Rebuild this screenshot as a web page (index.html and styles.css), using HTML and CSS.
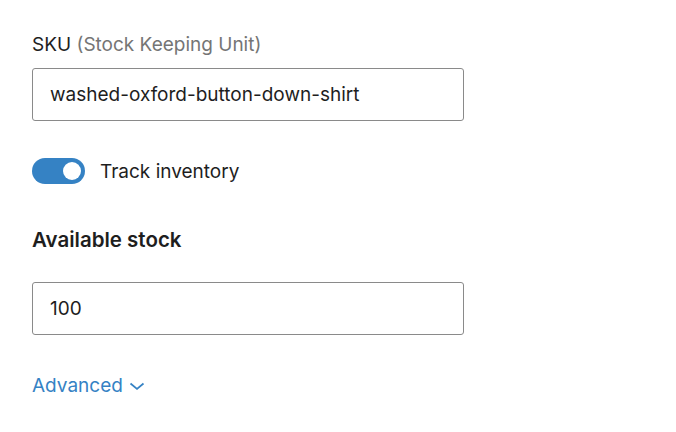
FILE: index.html
```html
<!DOCTYPE html>
<html lang="en">
<head>
  <meta charset="UTF-8" />
  <title>Inventory</title>
  <link rel="stylesheet" href="styles.css">
</head>
<body>

  <main class="panel">
    <div class="field">
      <label class="field-label" for="sku">SKU <span class="hint">(Stock Keeping Unit)</span></label>
      <input class="text-input" id="sku" type="text" value="washed-oxford-button-down-shirt">
    </div>

    <label class="toggle-row">
      <span class="toggle is-on"><span class="toggle-thumb"></span></span>
      <span class="toggle-text">Track inventory</span>
    </label>

    <div class="field">
      <h3 class="section-title">Available stock</h3>
      <input class="text-input" type="text" value="100">
    </div>

    <a class="advanced" href="#">
      Advanced
      <svg width="16" height="9" viewBox="0 0 16 9"><polyline points="1.5,1.5 8,7 14.5,1.5" fill="none" stroke="currentColor" stroke-width="1.7"/></svg>
    </a>
  </main>

</body>
</html>
```

FILE: styles.css
```css
* {
  margin: 0;
  padding: 0;
  box-sizing: border-box;
}

body {
  font-family: 'Inter', 'Noto Sans', sans-serif;
  background: #fff;
  color: #1e1e1e;
  font-size: 19px;
}

.panel {
  padding: 31px 32px;
  width: 496px;
}

.field-label {
  display: block;
  line-height: 28px;
  margin-bottom: 9px;
}

.hint {
  color: #757575;
}

.text-input {
  display: block;
  width: 100%;
  height: 53px;
  padding: 0 17px;
  font: inherit;
  color: #1e1e1e;
  border: 1.5px solid #8a8a8a;
  border-radius: 3px;
  background: #fff;
}

.toggle-row {
  display: flex;
  align-items: center;
  gap: 15px;
  margin: 37px 0 42px;
}

.toggle {
  position: relative;
  width: 53px;
  height: 26px;
  border-radius: 13px;
  background: #3582c4;
}

.toggle-thumb {
  position: absolute;
  top: 4px;
  right: 4px;
  width: 18px;
  height: 18px;
  border-radius: 50%;
  background: #fff;
}

.section-title {
  font-size: 20.5px;
  font-weight: 600;
  line-height: 28px;
  margin-bottom: 28px;
}

.advanced {
  display: inline-flex;
  align-items: center;
  gap: 6px;
  margin-top: 37px;
  line-height: 28px;
  color: #3582c4;
  text-decoration: none;
}
```
